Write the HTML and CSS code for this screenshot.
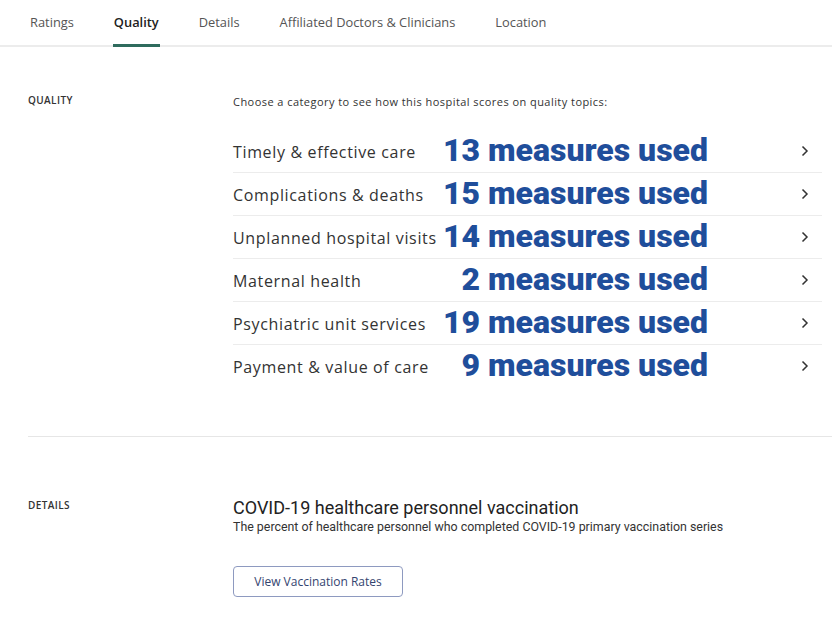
FILE: index.html
```html
<!DOCTYPE html>
<html lang="en">
<head>
    <meta charset="UTF-8">
    <meta name="viewport" content="width=device-width, initial-scale=1.0">
    <title>Hospital Quality</title>
    <link rel="stylesheet" href="styles.css">
</head>
<body>
    <nav class="tabs">
        <a class="tab">Ratings</a>
        <a class="tab active">Quality</a>
        <a class="tab">Details</a>
        <a class="tab">Affiliated Doctors &amp; Clinicians</a>
        <a class="tab">Location</a>
    </nav>

    <section class="block quality">
        <h2 class="block-label">QUALITY</h2>
        <div class="block-body">
            <p class="intro">Choose a category to see how this hospital scores on quality topics:</p>
            <ul class="topics">
                <li class="topic"><span class="topic-name">Timely &amp; effective care</span><span class="measures">13 measures used</span><svg class="chevron" viewBox="0 0 8 12"><polyline points="1.5,1.5 6,6 1.5,10.5"/></svg></li>
                <li class="topic"><span class="topic-name">Complications &amp; deaths</span><span class="measures">15 measures used</span><svg class="chevron" viewBox="0 0 8 12"><polyline points="1.5,1.5 6,6 1.5,10.5"/></svg></li>
                <li class="topic"><span class="topic-name">Unplanned hospital visits</span><span class="measures">14 measures used</span><svg class="chevron" viewBox="0 0 8 12"><polyline points="1.5,1.5 6,6 1.5,10.5"/></svg></li>
                <li class="topic"><span class="topic-name">Maternal health</span><span class="measures">2 measures used</span><svg class="chevron" viewBox="0 0 8 12"><polyline points="1.5,1.5 6,6 1.5,10.5"/></svg></li>
                <li class="topic"><span class="topic-name">Psychiatric unit services</span><span class="measures">19 measures used</span><svg class="chevron" viewBox="0 0 8 12"><polyline points="1.5,1.5 6,6 1.5,10.5"/></svg></li>
                <li class="topic"><span class="topic-name">Payment &amp; value of care</span><span class="measures">9 measures used</span><svg class="chevron" viewBox="0 0 8 12"><polyline points="1.5,1.5 6,6 1.5,10.5"/></svg></li>
            </ul>
        </div>
    </section>

    <section class="block details">
        <h2 class="block-label">DETAILS</h2>
        <div class="block-body">
            <h3 class="detail-title">COVID-19 healthcare personnel vaccination</h3>
            <p class="detail-text">The percent of healthcare personnel who completed COVID-19 primary vaccination series</p>
            <button class="outline-btn">View Vaccination Rates</button>
        </div>
    </section>
</body>
</html>
```

FILE: styles.css
```css
body {
    margin: 0;
    font-family: "Open Sans", Arial, sans-serif;
    color: #333;
    background: #fff;
}
.tabs {
    display: flex;
    gap: 40px;
    padding-left: 30px;
    height: 47px;
    box-shadow: inset 0 -2px 0 #ececec;
}
.tab {
    font-size: 12.85px;
    color: #555;
    padding-top: 13px;
    height: 31px;
    border-bottom: 3px solid transparent;
}
.tab.active {
    color: #222;
    font-weight: 600;
    border-bottom-color: #2f6b5d;
    padding: 13px 1px 0;
    margin: 0 -1px;
}
.block {
    display: grid;
    grid-template-columns: 205px 1fr;
    margin-left: 28px;
}
.block-label {
    margin: 0;
    font-size: 10px;
    font-weight: 600;
    letter-spacing: 0.4px;
    line-height: 14px;
    color: #333;
}
.block-body p {
    margin: 0;
}
.quality {
    padding: 48px 0 49px;
}
.quality .block-label {
    margin-top: -2px;
}
.intro {
    font-size: 11px;
    line-height: 14px;
    letter-spacing: 0.45px;
    color: #333;
}
.topics {
    list-style: none;
    margin: 21px 10px 0 0;
    padding: 0;
}
.topic {
    position: relative;
    display: flex;
    align-items: center;
    height: 42px;
    border-bottom: 1px solid #ececec;
    padding-right: 13px;
}
.topic:last-child {
    border-bottom: none;
}
.topic-name {
    flex: 1;
    font-size: 16px;
    font-weight: 500;
    letter-spacing: 0.65px;
    color: #333;
    padding-top: 1px;
}
.measures {
    position: absolute;
    right: 114px;
    top: 1px;
    font-family: Roboto, "Liberation Sans", sans-serif;
    font-weight: 900;
    font-size: 32px;
    line-height: 38px;
    color: #1f4e9b;
    white-space: nowrap;
}
.chevron {
    width: 8px;
    height: 12px;
    fill: none;
    stroke: #333;
    stroke-width: 1.5;
}
.details {
    border-top: 1px solid #e6e6e6;
    padding-top: 61px;
}
.detail-title {
    margin: 0 0 2px;
    font-family: Roboto, Arial, sans-serif;
    font-size: 18px;
    font-weight: 400;
    line-height: 20px;
    color: #222;
}
.detail-text {
    font-family: Roboto, Arial, sans-serif;
    font-size: 12.4px;
    line-height: 14px;
    color: #333;
}
.outline-btn {
    margin-top: 32px;
    width: 170px;
    height: 31px;
    background: #fff;
    border: 1px solid #8e9ac0;
    border-radius: 4px;
    font-family: "Open Sans", Arial, sans-serif;
    font-size: 12px;
    color: #34446f;
    cursor: pointer;
}
```
